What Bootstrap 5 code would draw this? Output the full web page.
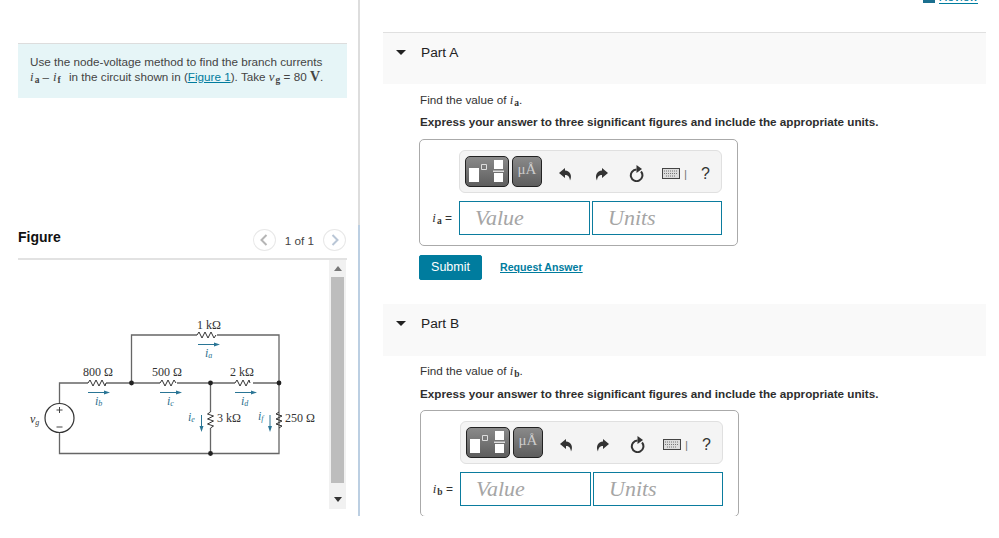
<!DOCTYPE html>
<html lang="en"><head><meta charset="utf-8"><title>Node-voltage method</title>
<link rel="stylesheet" href="https://cdn.jsdelivr.net/npm/bootstrap@5.3.0/dist/css/bootstrap.min.css">
<style>
html,body{height:538px;overflow:hidden;background:#fff}
body{font-family:"Liberation Sans",Arial,sans-serif;font-size:11.7px;color:#333;line-height:15px}
.stage{height:516px;overflow:hidden}
.leftpane{width:360px;flex:none;padding:43px 11px 0 18px;border-right:2px solid #ddd;border-image:linear-gradient(#ddd 225px,#bccfe2 225px) 1}
.problem{height:55px;background:#e6f5f7;border-top:1px solid #ddd;padding:10px 12px;color:#444}
.problem p{margin:0}
.mth{font-family:"Liberation Serif",serif;font-style:italic;font-size:13px}
.mth sub{font-size:9.5px;font-style:normal;font-weight:700;bottom:-.2em;margin-left:1px}
.mns{margin:0 4px 0 3px}
.gapr{margin-left:5px}
.rm{font-family:"Liberation Serif",serif;font-size:14px;font-weight:700}
a.lnk{color:#007c9e;text-decoration:underline}
.figrow{height:44px;margin-top:118px;border-bottom:2px solid #e2e2e2;padding:0 1px 0 0}
.figtitle{font-size:14px;font-weight:700;color:#111;line-height:18px}
.pager{gap:9px;color:#444;margin-top:6px}
.pgbtn{width:23px;height:22px;border:1px solid #e8e8e8;border-radius:50%;display:flex;align-items:center;justify-content:center}
.figbox{height:249px;margin-right:1px}
.figsvg{width:311px;height:249px;flex:none;display:block}
.figsvg text{font-family:"Liberation Serif",serif;font-size:12px;fill:#333}
.figsvg .cur{font-style:italic;fill:#2a6f8e;font-size:12px}
.sbar{width:17px;background:#f1f1f1;flex:none}
.sarrow{height:17px;display:flex;align-items:center;justify-content:center}
.sarrow.lower{height:26px;padding-top:6px}
.sthumb{height:206px;margin:0 2px;background:#bdbdbd}
.rightpane{width:603px;flex:none;margin-left:23px}
.topstrip{height:4px;overflow:hidden;margin-right:8px;color:#007c9e;font-size:12px;margin-bottom:28px}
.topstrip a{line-height:12px;display:block;border-bottom:1px solid #007c9e;text-decoration:none;color:#007c9e;margin-left:4px}
.rvicon{width:12px;height:3px;background:#1b6f8f;margin-bottom:1px}
.partbar{height:52px;background:#f9f9f9;padding:11px 0 0 13px;font-size:13.7px;color:#222;line-height:17px;gap:15px}
.partbar.first{border-top:1px solid #e0e0e0}
.tri{width:0;height:0;border-left:5px solid transparent;border-right:5px solid transparent;border-top:5px solid #222;margin-top:6px}
.body1{padding:7px 0 0 37px;color:#333}
.body1.firstbody{padding-top:8px}
.body1 p{margin:0 0 8px}
.firstbody p{margin-bottom:7px}
.instr{font-weight:700;color:#2e2e2e;line-height:16px}
.anscard{width:319px;height:107px;border:1px solid #aaa;border-radius:5px;margin-top:8px;padding:10px 15px 0 39px}
.firstbody .anscard{margin-top:9px}
.firstbody .anscard,.firstbody .actions{margin-left:-1px}
.tools{height:43px;width:263px;background:#f4f4f4;border:1px solid #e0e0e0;border-radius:6px;padding:5px;position:relative}
.tbtn{height:31px;padding:0;border:1px solid #222;border-radius:5px;background:linear-gradient(#8a8a8a,#5e5e5e);display:flex;align-items:center;justify-content:center;color:#ccc}
.tbtn.w1{width:44px}.tbtn.w2{width:30px;margin-left:3px;font-family:"Liberation Serif",serif;font-size:15px;padding-bottom:4px}
.tic{display:block;flex:none;margin-top:4px}
.tundo{margin-left:17px}.tredo{margin-left:21px}.treset{margin-left:21px}.tkey{margin-left:18px}
.tsep{margin:3px 0 0 4px;color:#777}
.thelp{margin:4px 0 0 14px;font-size:16px;color:#333}
.ansrow{margin-top:8px;margin-left:-39px}
.anslbl{width:39px;flex:none;padding:0 7px 0 0;text-align:right;color:#333;white-space:nowrap;font-size:12px}
.ansin{height:34px;border:1px solid #0b7c9e;border-radius:0;font-family:"Liberation Serif",serif;font-style:italic;font-size:22px;padding:0 0 0 15px;width:131px;flex:none;background:#fff;box-shadow:none}
.ansin+.ansin{margin-left:2px;width:130px}
.ansin::placeholder{color:#a5a5a5;opacity:1}
.actions{margin-top:9px;gap:18px}
.subbtn{width:63px;height:25px;padding:0;font-size:12.5px;line-height:23px;background:#007c9e;border:1px solid #007c9e;border-radius:2px;color:#fff}
.reqlnk{font-size:10.6px;font-weight:700;color:#007c9e;text-decoration:underline}
.partb{margin-top:24px}
</style></head>
<body>
<div class="d-flex stage">
  <div class="leftpane">
    <div class="problem"><p>Use the node-voltage method to find the branch currents</p>
    <p><span class="mth">i<sub>a</sub></span><span class="mns">&#8211;</span><span class="mth">i<sub>f</sub></span>&nbsp;<span class="gapr">in</span> the circuit shown in (<a class="lnk" href="#">Figure 1</a>). Take <span class="mth">v<sub>g</sub></span> = 80 <span class="rm">V</span>.</p></div>
    <div class="figrow d-flex justify-content-between align-items-center">
      <div class="figtitle">Figure</div>
      <div class="d-flex align-items-center pager">
        <span class="pgbtn"><svg width="8" height="12" viewBox="0 0 8 12"><path d="M6.500 1 1.500 6l5 5" fill="none" stroke="#b5b5b5" stroke-width="2"/></svg></span>
        <span>1 of 1</span>
        <span class="pgbtn"><svg width="8" height="12" viewBox="0 0 8 12"><path d="M1.500 1l5 5-5 5" fill="none" stroke="#b9c6d6" stroke-width="2"/></svg></span>
      </div>
    </div>
    <div class="figbox d-flex">
      <svg class="figsvg" viewBox="18 260 311 249" aria-label="circuit">
        <g fill="none" stroke="#666" stroke-width="1.300">
          <path d="M131.500 383V335H197M217 335H279V453.500H59.500V433M59.500 403V383H88M106 383H160M177 383H235M253 383H279M210.500 383V412M210.500 428V453.500"/>
        </g>
        <g fill="none" stroke="#333" stroke-width="1">
          <path d="M197 335l2-3 3 6 3-6 3 6 3-6 3 6 2-3"/><path d="M88 383l2-3 3 6 3-6 3 6 3-6 3 6 1-3"/><path d="M160 383l2-3 3 6 3-6 3 6 3-6 2 3"/><path d="M235 383l2-3 3 6 3-6 3 6 3-6 1 3"/>
          <path d="M210.500 412l-3 2 6 2-6 3 6 2-6 3 6 2-3 2"/><path d="M279 412l-3 2 6 2-6 3 6 2-6 3 6 2-3 2"/>
          <circle cx="59.500" cy="418" r="14.500" stroke-width="1.200"/>
        </g>
        <g fill="#222"><circle cx="131.500" cy="383" r="2.400"/><circle cx="210.500" cy="383" r="2.400"/><circle cx="279" cy="383" r="2.400"/><circle cx="210.500" cy="453.500" r="2.400"/></g>
        <path d="M59.500 407v6M56.500 410h6M56.500 427h6" stroke="#444" stroke-width="1" fill="none"/>
        <g fill="none" stroke="#2a7595" stroke-width="1"><path d="M198 344.500H216M88 392.500H106M160 392.500H178M235 392.500H253M201.500 415v13M270 415v13"/></g>
        <g fill="#2a7595"><path d="M220 344.500l-6-2v4zM110 392.500l-6-2v4zM182 392.500l-6-2v4zM257 392.500l-6-2v4zM201.500 432l-2-6h4zM270 432l-2-6h4z"/></g>
        <text x="197" y="329">1 kΩ</text><text x="83" y="376">800 Ω</text><text x="152" y="376">500 Ω</text><text x="230" y="376">2 kΩ</text>
        <text x="217" y="422">3 kΩ</text><text x="285" y="422">250 Ω</text>
        <text x="30" y="423" font-style="italic">v<tspan font-size="8" dy="2">g</tspan></text>
        <text class="cur" x="205" y="357">i<tspan font-size="8" dy="1">a</tspan></text>
        <text class="cur" x="95" y="405">i<tspan font-size="8" dy="1">b</tspan></text>
        <text class="cur" x="167" y="405">i<tspan font-size="8" dy="1">c</tspan></text>
        <text class="cur" x="241" y="405">i<tspan font-size="8" dy="1">d</tspan></text>
        <text class="cur" x="188" y="421">i<tspan font-size="8" dy="1">e</tspan></text>
        <text class="cur" x="258" y="420">i<tspan font-size="8" dy="1">f</tspan></text>
      </svg>
      <div class="sbar">
        <div class="sarrow"><svg width="8" height="5" viewBox="0 0 8 5"><path d="M4 0l4 5H0z" fill="#777"/></svg></div>
        <div class="sthumb"></div>
        <div class="sarrow lower"><svg width="8" height="5" viewBox="0 0 8 5"><path d="M4 5l4-5H0z" fill="#333"/></svg></div>
      </div>
    </div>
  </div>
  <div class="rightpane">
    <div class="topstrip d-flex justify-content-end align-items-end"><div class="rvicon"></div><a href="#">Review</a></div>

    <div class="partbar first d-flex"><span class="tri"></span><span>Part A</span></div>
    <div class="body1 firstbody">
      <p>Find the value of <span class="mth">i<sub>a</sub></span>.</p>
      <p class="instr">Express your answer to three significant figures and include the appropriate units.</p>
      <div class="anscard">
        <div class="tools d-flex align-items-center">
          <button class="btn tbtn w1" aria-label="templates"><svg width="36" height="24" viewBox="0 0 36 24"><path fill="#fff" d="M0 8h10v14H0zM25 0h9v9h-9zM25 13h9v9h-9z"/><path fill="#ddd" d="M24 10.500h11v1.500H24z"/><path fill="none" stroke="#ddd" d="M12.500 4.500h5v5h-5z"/></svg></button>
          <button class="btn tbtn w2">μÅ</button>
          <svg class="tic tundo" width="14" height="14" viewBox="0 0 14 14"><path fill="#333" d="M6 1 0 6l6 5V8c3 0 4.500 1.500 5 5.500 2.500-5 0-9.500-5-10z"/></svg>
          <svg class="tic tredo" width="14" height="14" viewBox="0 0 14 14"><path fill="#333" d="M8 1l6 5-6 5V8c-3 0-4.500 1.500-5 5.500C.5 8.500 3 4 8 3.500z"/></svg>
          <svg class="tic treset" width="15" height="17" viewBox="0 0 15 17"><path fill="none" stroke="#333" stroke-width="2" d="M7.500 4.500a5.800 5.800 0 1 0 4.500 2"/><path fill="#333" d="M7.500 0v8L13 4z"/></svg>
          <svg class="tic tkey" width="18" height="11" viewBox="0 0 18 11"><rect x=".5" y=".5" width="17" height="10" fill="#ddd" stroke="#444"/><path d="M2 3h14M2 5.500h14M4 8h10" stroke="#777" stroke-dasharray="1 1"/></svg>
          <span class="tsep">|</span>
          <span class="thelp">?</span>
        </div>
        <div class="d-flex align-items-center ansrow">
          <span class="anslbl"><span class="mth">i<sub>a</sub></span> =</span>
          <input class="form-control ansin" placeholder="Value"><input class="form-control ansin" placeholder="Units">
        </div>
      </div>
      <div class="d-flex align-items-center actions"><button class="btn subbtn">Submit</button><a class="reqlnk" href="#">Request Answer</a></div>
    </div>

    <div class="partbar d-flex partb"><span class="tri"></span><span>Part B</span></div>
    <div class="body1">
      <p>Find the value of <span class="mth">i<sub>b</sub></span>.</p>
      <p class="instr">Express your answer to three significant figures and include the appropriate units.</p>
      <div class="anscard">
        <div class="tools d-flex align-items-center">
          <button class="btn tbtn w1" aria-label="templates"><svg width="36" height="24" viewBox="0 0 36 24"><path fill="#fff" d="M0 8h10v14H0zM25 0h9v9h-9zM25 13h9v9h-9z"/><path fill="#ddd" d="M24 10.500h11v1.500H24z"/><path fill="none" stroke="#ddd" d="M12.500 4.500h5v5h-5z"/></svg></button>
          <button class="btn tbtn w2">μÅ</button>
          <svg class="tic tundo" width="14" height="14" viewBox="0 0 14 14"><path fill="#333" d="M6 1 0 6l6 5V8c3 0 4.500 1.500 5 5.500 2.500-5 0-9.500-5-10z"/></svg>
          <svg class="tic tredo" width="14" height="14" viewBox="0 0 14 14"><path fill="#333" d="M8 1l6 5-6 5V8c-3 0-4.500 1.500-5 5.500C.5 8.500 3 4 8 3.500z"/></svg>
          <svg class="tic treset" width="15" height="17" viewBox="0 0 15 17"><path fill="none" stroke="#333" stroke-width="2" d="M7.500 4.500a5.800 5.800 0 1 0 4.500 2"/><path fill="#333" d="M7.500 0v8L13 4z"/></svg>
          <svg class="tic tkey" width="18" height="11" viewBox="0 0 18 11"><rect x=".5" y=".5" width="17" height="10" fill="#ddd" stroke="#444"/><path d="M2 3h14M2 5.500h14M4 8h10" stroke="#777" stroke-dasharray="1 1"/></svg>
          <span class="tsep">|</span>
          <span class="thelp">?</span>
        </div>
        <div class="d-flex align-items-center ansrow">
          <span class="anslbl"><span class="mth">i<sub>b</sub></span> =</span>
          <input class="form-control ansin" placeholder="Value"><input class="form-control ansin" placeholder="Units">
        </div>
      </div>
    </div>
  </div>
</div>
<script src="https://cdn.jsdelivr.net/npm/bootstrap@5.3.0/dist/js/bootstrap.bundle.min.js"></script>
</body></html>
